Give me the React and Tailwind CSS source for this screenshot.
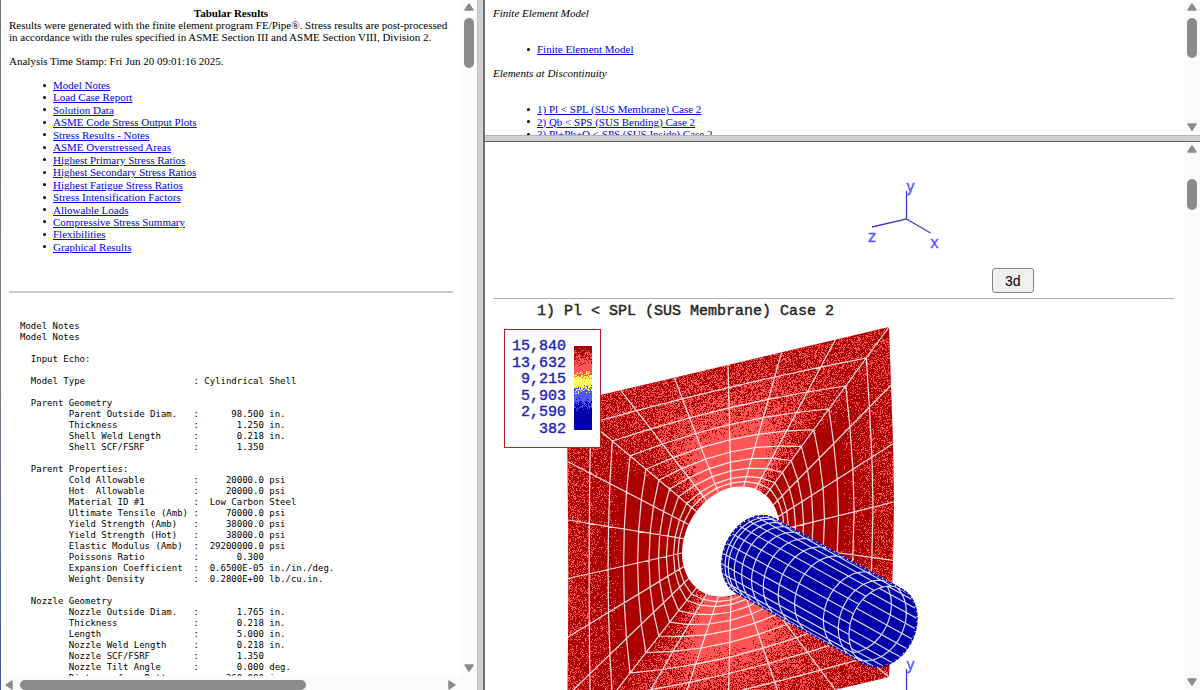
import { useId } from 'react'

const RESULT_LINKS = [
  'Model Notes', 'Load Case Report', 'Solution Data', 'ASME Code Stress Output Plots',
  'Stress Results - Notes', 'ASME Overstressed Areas', 'Highest Primary Stress Ratios',
  'Highest Secondary Stress Ratios', 'Highest Fatigue Stress Ratios', 'Stress Intensification Factors',
  'Allowable Loads', 'Compressive Stress Summary', 'Flexibilities', 'Graphical Results',
]

const PLOT_LINKS = [
  '1) Pl < SPL (SUS Membrane) Case 2',
  '2) Qb < SPS (SUS Bending) Case 2',
  '3) Pl+Pb+Q < SPS (SUS Inside) Case 2',
]

const SECTIONS = [
  ['Parent Geometry', [
    ['Parent Outside Diam.', '98.500', 'in.'],
    ['Thickness', '1.250', 'in.'],
    ['Shell Weld Length', '0.218', 'in.'],
    ['Shell SCF/FSRF', '1.350', ''],
  ]],
  ['Parent Properties:', [
    ['Cold Allowable', '20000.0', 'psi'],
    ['Hot  Allowable', '20000.0', 'psi'],
    ['Material ID #1', 'Low Carbon', 'Steel'],
    ['Ultimate Tensile (Amb)', '70000.0', 'psi'],
    ['Yield Strength (Amb)', '38000.0', 'psi'],
    ['Yield Strength (Hot)', '38000.0', 'psi'],
    ['Elastic Modulus (Amb)', '29200000.0', 'psi'],
    ['Poissons Ratio', '0.300', ''],
    ['Expansion Coefficient', '0.6500E-05', 'in./in./deg.'],
    ['Weight Density', '0.2800E+00', 'lb./cu.in.'],
  ]],
  ['Nozzle Geometry', [
    ['Nozzle Outside Diam.', '1.765', 'in.'],
    ['Thickness', '0.218', 'in.'],
    ['Length', '5.000', 'in.'],
    ['Nozzle Weld Length', '0.218', 'in.'],
    ['Nozzle SCF/FSRF', '1.350', ''],
    ['Nozzle Tilt Angle', '0.000', 'deg.'],
    ['Distance from Bottom', '360.000', 'in.'],
  ]],
]

const row = ([label, value, unit]) => `${' '.repeat(7)}${label.padEnd(23)}:${value.padStart(12)} ${unit}`

const REPORT = [
  'Model Notes',
  'Model Notes',
  '',
  '  Input Echo:',
  '',
  `  ${'Model Type'.padEnd(30)}: Cylindrical Shell`,
  ...SECTIONS.flatMap(([title, rows]) => ['', `  ${title}`, ...rows.map(r => `  ${row(r)}`)]),
].join('\n')

// ---------- stress plot geometry ----------

const HOLE = { x: 731, y: 541.6, rx: 49, ry: 54, skew: 0.233 }
const RINGS = [0.184, 0.35, 0.487, 0.61, 0.71, 0.793, 0.863, 0.925, 0.963]
const CORNERS = [[567, 403], [889, 327], [889, 677], [567, 754]]
const RIGHT_BULGE = [0, 2, 4, 5, 4, 2]

const rand = (x, y) => {
  const s = Math.sin(x * 12.9898 + y * 78.233) * 43758.5453
  return s - Math.floor(s)
}

const outer = Array.from({ length: 24 }, (_, k) => {
  const side = Math.floor(k / 6)
  const f = (k % 6) / 6
  const [ax, ay] = CORNERS[side]
  const [bx, by] = CORNERS[(side + 1) % 4]
  const bulge = side === 1 ? RIGHT_BULGE[k % 6] : side === 3 ? RIGHT_BULGE[k % 6] / 4 : 0
  return [ax + (bx - ax) * f + bulge, ay + (by - ay) * f]
})

const inner = outer.map((_, k) => {
  const a = ((-135 + k * 15) * Math.PI) / 180
  const dx = HOLE.rx * Math.cos(a)
  return [HOLE.x + dx, HOLE.y - dx * HOLE.skew + HOLE.ry * Math.sin(a)]
})

const toPath = pts => 'M' + pts.map(([x, y]) => `${x.toFixed(1)} ${y.toFixed(1)}`).join('L')
const ringPts = t => outer.map(([x, y], k) => [x + (inner[k][0] - x) * t, y + (inner[k][1] - y) * t])

const platePath = toPath(outer) + 'Z'
const meshPath = RINGS.map(t => toPath(ringPts(t)) + 'Z').join('') + outer.map((p, k) => toPath([p, inner[k]])).join('')

const holePath = toPath(Array.from({ length: 72 }, (_, k) => {
  const a = (k * 5 * Math.PI) / 180
  const dx = HOLE.rx * Math.cos(a)
  return [HOLE.x + dx, HOLE.y - dx * HOLE.skew + HOLE.ry * Math.sin(a)]
})) + 'Z'

// share of light pixels at a point of the plate
function lightShare(x, y) {
  const u = (x - HOLE.x) / HOLE.rx
  const v = (y - HOLE.y + HOLE.skew * (x - HOLE.x)) / HOLE.ry
  const rho = Math.hypot(u, v)
  if (rho < 1) return 0
  const edge = (rho * 3.27) / Math.max(Math.abs(u), Math.abs(v))
  const w = Math.min(1, Math.max(0, (edge - rho) / (edge - 1)) ** 1.4 * 1.2)
  const c = (v * v) / (rho * rho)
  const near = Math.min(1.4, Math.max(-0.4, (c - 0.5) * 3.5))
  return (0.27 + 0.08 * c) * (1 - w) + near * w
}

function grainPath() {
  let d = ''
  for (let y = 325; y < 692; y++) {
    let start = -1
    for (let x = 565; x <= 896; x++) {
      const on = x < 896 && rand(x, y) < lightShare(x, y)
      if (on && start < 0) start = x
      if (!on && start >= 0) {
        d += `M${start} ${y}h${x - start}v1h${start - x}z`
        start = -1
      }
    }
  }
  return d
}
const grain = grainPath()

const SCALE = [[346, 0], [366, 1], [370, 1], [379, 2], [384, 2], [394, 3], [397, 3], [411, 4], [430, 4]]
const SCALE_COLORS = ['#aa0000', '#ff5555', '#ffff55', '#5555ff', '#0000aa']
const scalePaths = SCALE_COLORS.map(() => '')
for (let y = 346; y < 430; y++) {
  const i = SCALE.findIndex(([sy]) => sy > y) - 1
  const [y0, c0] = SCALE[i]
  const [y1, c1] = SCALE[i + 1]
  for (let x = 574; x < 592; x++) {
    const c = rand(x, y) < (y - y0) / (y1 - y0) ? c1 : c0
    scalePaths[c] += `M${x} ${y}h1v1h-1z`
  }
}

const LEGEND = [['15,840', 350], ['13,632', 367], ['9,215', 383], ['5,903', 400], ['2,590', 416], ['382', 433]]

// nozzle: a tube from BACK to FRONT
const BACK = [756, 556]
const FRONT = [883, 626.5]
const TUBE_RINGS = [0, 0.024, 0.05, 0.097, 0.155, 0.233, 0.325, 0.443, 0.572, 0.798, 0.916, 1]
const tubePt = (f, deg) => {
  const a = (deg * Math.PI) / 180
  const cx = BACK[0] + (FRONT[0] - BACK[0]) * f
  const cy = BACK[1] + (FRONT[1] - BACK[1]) * f
  return [cx + 34 * Math.cos(a), cy - 8 * Math.cos(a) + 39.5 * Math.sin(a)]
}
const arc = (f, from, to) => Array.from({ length: 37 }, (_, i) => tubePt(f, from + ((to - from) * i) / 36))

const tubeBody = toPath([...arc(0, 124, 304), ...arc(1, 304, 484)]) + 'Z'
const tubeMouth = toPath(arc(1, 0, 360)) + 'Z'
const angles = Array.from({ length: 24 }, (_, k) => 120 + k * 15)
const tubeOutside = TUBE_RINGS.map(f => toPath(arc(f, 124, 304))).join('') +
  angles.filter(a => a > 124 && a < 304).map(a => toPath([tubePt(0, a), tubePt(1, a)])).join('')
const tubeInside = TUBE_RINGS.slice(-3).map(f => toPath(arc(f, 304, 484))).join('') +
  angles.filter(a => a > 304 || a < 124).map(a => toPath([tubePt(0.5, a), tubePt(1, a)])).join('')
const tubeEdges = [124, 304, 130, 298].map(a => toPath([tubePt(0, a), tubePt(1, a)])).join('')

// ---------- pieces ----------

const ARROWS = {
  up: 'M6 3 10 9H2Z',
  down: 'M6 9 2 3h8Z',
  left: 'M3 6 9 2v8Z',
  right: 'M9 6 3 2v8Z',
}

const Arrow = ({ dir }) => (
  <svg viewBox="0 0 12 12" className="size-3 shrink-0" aria-hidden="true">
    <path d={ARROWS[dir]} fill="#8b8b8b" stroke="#8b8b8b" strokeWidth="1.5" strokeLinejoin="round" />
  </svg>
)

const VBar = ({ thumb }) => (
  <div className="w-4 shrink-0 bg-[#fbfbfb] flex flex-col items-center justify-between pt-px pb-[2px]">
    <div className="flex flex-col items-center">
      <Arrow dir="up" />
      <div className={`w-[10px] rounded-full bg-[#8b8b8b] ${thumb}`} />
    </div>
    <Arrow dir="down" />
  </div>
)

const Axes = ({ x, y }) => (
  <g fontFamily='"DejaVu Sans", sans-serif' fontSize="15" fill="#5555ff" stroke="#5555ff" strokeWidth="0.3">
    <path d={`M${x + 0.5} ${y - 28}V${y}L${x - 34} ${y + 8}M${x + 0.5} ${y}l24 14`} fill="none" stroke="#3c3ccc" strokeWidth="1.3" />
    <text x={x} y={y - 27}>y</text>
    <text x={x - 38} y={y + 23}>z</text>
    <text x={x + 24} y={y + 29}>x</text>
  </g>
)

function StressPlot() {
  const id = useId()
  return (
    <svg viewBox="493 299 500 400" className="block w-[500px] h-[400px] shrink-0">
      <defs>
        <clipPath id={`${id}plate`}><path d={platePath} /></clipPath>
        <clipPath id={`${id}mouth`}><path d={tubeMouth} /></clipPath>
      </defs>
      <path d={platePath} fill="#aa0000" />
      <g clipPath={`url(#${id}plate)`}>
        <path d={grain} fill="#ff5555" shapeRendering="crispEdges" />
      </g>
      <path d={meshPath} fill="none" stroke="#fff" strokeOpacity="0.85" strokeWidth="1.25" />
      <path d={holePath} fill="#fff" />

      <path d={tubeBody} fill="#0000aa" />
      <path d={tubeOutside} fill="none" stroke="#fff" strokeOpacity="0.85" strokeWidth="1.2" />
      <path d={tubeInside} fill="none" stroke="#fff" strokeOpacity="0.85" strokeWidth="1.2" clipPath={`url(#${id}mouth)`} />
      <path d={tubeEdges} fill="none" stroke="#fff" strokeOpacity="0.85" strokeDasharray="4 2" />
      <path d={tubeBody} fill="none" stroke="#0000aa" strokeWidth="1.5" strokeDasharray="4 1" />

      <rect x="504.5" y="329.5" width="96" height="118" fill="#fff" stroke="#b22222" />
      {SCALE_COLORS.map((c, i) => <path key={c} d={scalePaths[i]} fill={c} shapeRendering="crispEdges" />)}
      <g fontFamily='"Liberation Mono", monospace' fontSize="15" strokeWidth="0.4">
        {LEGEND.map(([v, y]) => <text key={v} x="566" y={y} textAnchor="end" fill="#2222bb" stroke="#2222bb">{v}</text>)}
        <text x="537" y="315" fill="#222" stroke="#222">1) Pl &lt; SPL (SUS Membrane) Case 2</text>
      </g>
      <Axes x={906} y={697} />
    </svg>
  )
}

const LinkItem = ({ children }) => (
  <li className="flex items-center gap-[7px] before:size-[3px] before:rounded-full before:bg-black">
    <a href="#" className="text-[#0000ee] underline">{children}</a>
  </li>
)

export default function App() {
  return (
    <div className="h-screen flex overflow-hidden bg-white text-black text-[11px] leading-3 font-['Liberation_Serif',serif]">
      <div className="w-px shrink-0 bg-linear-to-b from-[#707070] via-[#807c7c] to-[#3c58a0]" />
      <div className="w-[calc(40%-4px)] shrink-0 flex flex-col">
        <div className="flex-1 min-h-0 flex">
          <main className="flex-1 min-w-0 overflow-hidden px-2 pt-[7px]">
            <h1 className="text-center font-bold">Tabular Results</h1>
            <p>
              Results were generated with the finite element program FE/Pipe®. Stress results are post-processed
              in accordance with the rules specified in ASME Section III and ASME Section VIII, Division 2.
            </p>
            <p className="mt-3">Analysis Time Stamp: Fri Jun 20 09:01:16 2025.</p>
            <ul className="mt-3 h-[174px] pl-[34px] flex flex-col justify-between">
              {RESULT_LINKS.map(l => <LinkItem key={l}>{l}</LinkItem>)}
            </ul>
            <hr className="mt-[38px] border-t-2 border-[#c8c8c8]" />
            <pre className="mt-7 pl-[11px] text-[9px] leading-[11px] font-['DejaVu_Sans_Mono',monospace]">{REPORT}</pre>
          </main>
          <VBar thumb="h-[50px] mt-[5px]" />
        </div>
        <div className="h-[14px] shrink-0 bg-[#fbfbfb] flex items-center justify-between pl-[2px] pr-[19px] pt-[3px]">
          <Arrow dir="left" />
          <div className="flex-1 px-[5px]">
            <div className="w-[68%] h-[10px] rounded-full bg-[#8b8b8b]" />
          </div>
          <Arrow dir="right" />
        </div>
      </div>

      <div className="w-2 shrink-0 bg-[#d0d0d0] border-l border-r-2 border-l-[#c0c0c0] border-r-[#707070]" />

      <div className="flex-1 min-w-0 flex flex-col">
        <div className="h-[calc(20%-3px)] shrink-0 flex">
          <nav className="flex-1 min-w-0 overflow-hidden px-2 pt-[7px]">
            <p className="italic">Finite Element Model</p>
            <ul className="mt-6 pl-[34px]">
              <LinkItem>Finite Element Model</LinkItem>
            </ul>
            <p className="mt-3 italic">Elements at Discontinuity</p>
            <ul className="mt-6 h-[37px] pl-[34px] flex flex-col justify-between">
              {PLOT_LINKS.map(l => <LinkItem key={l}>{l}</LinkItem>)}
            </ul>
          </nav>
          <VBar thumb="h-10 mt-[5px]" />
        </div>

        <div className="h-[7px] shrink-0 bg-[#d0d0d0] border-t border-b border-t-[#b4b4b4] border-b-[#606060]" />

        <div className="flex-1 min-h-0 flex">
          <section className="flex-1 min-w-0 overflow-hidden pl-2 pr-[10px]">
            <div className="flex items-end">
              <svg viewBox="493 142 499 151" className="w-[499px] h-[151px] shrink-0">
                <Axes x={906} y={219} />
              </svg>
              <button className="h-[25px] px-3 rounded-[3px] border border-[#858585] bg-[#efefef] text-sm leading-4 font-['Liberation_Sans',sans-serif]">3d</button>
            </div>
            <hr className="mt-[5px] border-[#b0b0b0]" />
            <StressPlot />
          </section>
          <VBar thumb="h-[31px] mt-[24px]" />
        </div>
      </div>
    </div>
  )
}
